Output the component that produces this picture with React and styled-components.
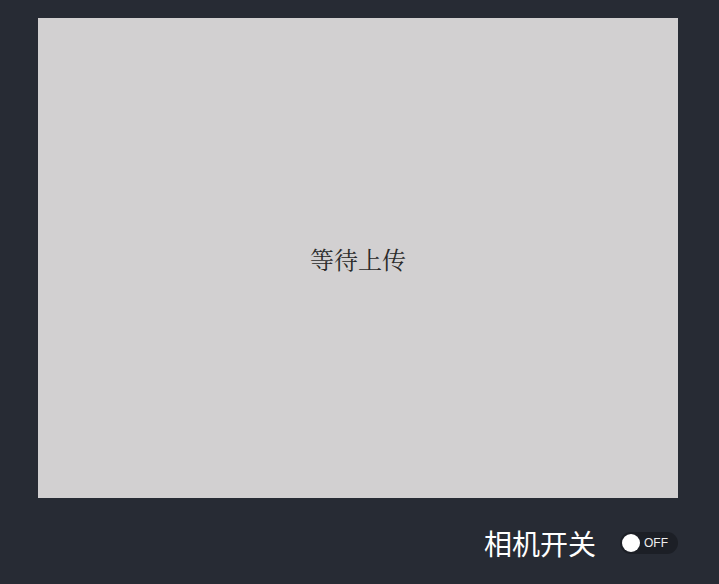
import React, { useState } from 'react';
import styled, { createGlobalStyle } from 'styled-components';

const GlobalStyle = createGlobalStyle`
  html, body {
    margin: 0;
    padding: 0;
    background: #272b34;
  }
`;

const Page = styled.div`
  width: 719px;
  height: 584px;
  padding: 18px 0 0 38px;
  box-sizing: border-box;
  display: flex;
  flex-direction: column;
`;

const Preview = styled.div`
  width: 640px;
  height: 480px;
  background: #d2d0d1;
  display: flex;
  align-items: center;
  justify-content: center;
`;

const Placeholder = styled.span`
  font-family: "Noto Serif CJK SC", "AR PL UMing CN", "Noto Sans CJK SC", serif;
  font-size: 24px;
  color: #2a2a2a;
`;

const Controls = styled.div`
  width: 640px;
  display: flex;
  justify-content: flex-end;
  align-items: center;
  gap: 24px;
  margin-top: 27px;
`;

const Label = styled.span`
  font-family: "Noto Sans CJK SC", sans-serif;
  font-size: 28px;
  color: #ffffff;
  line-height: 36px;
`;

const Switch = styled.button`
  width: 58px;
  height: 22px;
  border: none;
  border-radius: 11px;
  background: ${(p) => (p.$on ? '#3c8dde' : '#1c1f26')};
  padding: 0 2px;
  display: flex;
  align-items: center;
  flex-direction: ${(p) => (p.$on ? 'row-reverse' : 'row')};
  gap: 4px;
  cursor: pointer;
`;

const Knob = styled.span`
  width: 18px;
  height: 18px;
  border-radius: 50%;
  background: #ffffff;
`;

const SwitchText = styled.span`
  font-family: "Liberation Sans", Arial, sans-serif;
  font-size: 12px;
  color: #eeeeee;
`;

export default function App() {
  const [on, setOn] = useState(false);
  return (
    <>
      <GlobalStyle />
      <Page>
        <Preview>
          <Placeholder>等待上传</Placeholder>
        </Preview>
        <Controls>
          <Label>相机开关</Label>
          <Switch $on={on} onClick={() => setOn(!on)}>
            <Knob />
            <SwitchText>{on ? 'ON' : 'OFF'}</SwitchText>
          </Switch>
        </Controls>
      </Page>
    </>
  );
}
